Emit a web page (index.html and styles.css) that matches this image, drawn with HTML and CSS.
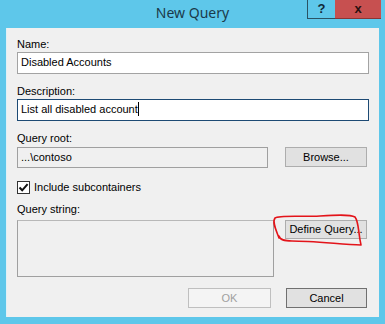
FILE: index.html
```html
<!DOCTYPE html>
<html>
<head>
<meta charset="utf-8">
<link rel="stylesheet" href="styles.css">
</head>
<body>
<div class="window">
  <div class="titlebar">
    <div class="title">New Query</div>
    <div class="caption-buttons">
      <div class="cap help">?</div>
      <div class="cap close">x</div>
    </div>
  </div>
  <div class="client">
    <div class="label first">Name:</div>
    <div class="input">Disabled Accounts</div>
    <div class="label">Description:</div>
    <div class="input focused">List all disabled account<span class="caret"></span></div>
    <div class="label">Query root:</div>
    <div class="row root-row">
      <div class="input readonly root">...\contoso</div>
      <div class="btn">Browse...</div>
    </div>
    <div class="check-row">
      <span class="checkbox"><svg width="11" height="11" viewBox="0 0 11 11"><path d="M1.5 5.5 L4.2 8.3 L9.6 2.2" fill="none" stroke="#111" stroke-width="2"/></svg></span>
      <span>Include subcontainers</span>
    </div>
    <div class="label qs">Query string:</div>
    <div class="row qs-row">
      <div class="textarea"></div>
      <div class="btn define">Define Query...</div>
    </div>
    <div class="row footer">
      <div class="btn disabled">OK</div>
      <div class="btn cancel">Cancel</div>
    </div>
  </div>
  <svg class="scribble" width="385" height="324" viewBox="0 0 385 324">
    <path d="M279 238 C276 230 272 222 275 218 C279 215 300 217 320 216 C335 215 350 214 355 217 C359 222 358 232 361 245 C340 244 310 241 292 241 C284 241 280 240 279 236" fill="none" stroke="#e3141a" stroke-width="1.6" stroke-linecap="round" stroke-linejoin="round"/>
  </svg>
</div>
</body>
</html>
```
FILE: styles.css
```css
html, body {
  margin: 0;
  padding: 0;
}
body {
  font-family: "Liberation Sans", "Noto Sans", sans-serif;
  font-size: 11px;
  color: #000;
}
.window {
  position: relative;
  width: 385px;
  height: 324px;
  background: #5ec7ea;
  overflow: hidden;
  display: flex;
  flex-direction: column;
}
.titlebar {
  position: relative;
  height: 28px;
  flex: none;
}
.title {
  text-align: center;
  font-family: "Noto Sans", "Liberation Sans", sans-serif;
  font-size: 14px;
  line-height: 26px;
  color: #1b3a4a;
}
.caption-buttons {
  position: absolute;
  top: 0;
  right: 4px;
  display: flex;
}
.cap {
  height: 19px;
  line-height: 18px;
  text-align: center;
  font-weight: bold;
  font-family: "Liberation Sans", sans-serif;
  box-sizing: border-box;
}
.help {
  width: 28px;
  font-size: 13px;
  color: #102838;
  border-left: 1px solid #2a5364;
  border-bottom: 1px solid #2a5364;
}
.close {
  width: 46px;
  background: #c75050;
  color: #2a1010;
  font-size: 13px;
  border-bottom: 1px solid #8a3535;
}
.client {
  margin: 0 6px 7px 6px;
  flex: 1;
  background: #f0f0f0;
  padding: 0 10px 0 10px;
  box-sizing: border-box;
  border-left: 1px solid #e0f1f7;
}
.label {
  height: 14px;
  line-height: 14px;
  margin-top: 10px;
  margin-bottom: 1px;
}
.label.first {
  margin-top: 9px;
}
.input {
  height: 22px;
  box-sizing: border-box;
  border: 1px solid #a3a3a3;
  background: #fff;
  line-height: 19px;
  padding-left: 3px;
  white-space: nowrap;
}
.input.focused {
  border-color: #1d4a74;
}
.caret {
  display: inline-block;
  width: 1px;
  height: 14px;
  background: #000;
  vertical-align: -3px;
}
.row {
  display: flex;
  align-items: flex-start;
}
.root-row {
  margin-top: 2px;
}
.input.readonly {
  background: #f0f0f0;
  height: 21px;
  line-height: 18px;
}
.root {
  width: 251px;
  border-color: #a0a0a0;
}
.btn {
  box-sizing: border-box;
  width: 82px;
  height: 20px;
  border: 1px solid #adadad;
  background: #e1e1e1;
  text-align: center;
  line-height: 18px;
  margin-left: auto;
  margin-right: 2px;
}
.check-row {
  display: flex;
  align-items: center;
  gap: 4px;
  margin-top: 12px;
  height: 14px;
}
.checkbox {
  box-sizing: border-box;
  width: 13px;
  height: 13px;
  border: 1px solid #333;
  background: #fff;
  display: flex;
  align-items: center;
  justify-content: center;
}
.label.qs {
  margin-top: 8px;
}
.qs-row {
  margin-top: 4px;
}
.textarea {
  box-sizing: border-box;
  width: 257px;
  height: 57px;
  border: 1px solid #a0a0a0;
  border-top-color: #b8b8b8;
  background: #f0f0f0;
}
.define {
  height: 19px;
  line-height: 17px;
}
.footer {
  margin-top: 11px;
  justify-content: flex-end;
  gap: 13px;
}
.footer .btn {
  margin-left: 0;
  width: 83px;
  height: 20px;
}
.btn.disabled {
  background: #f4f4f4;
  border-color: #bfbfbf;
  color: #a0a0a0;
}
.btn.cancel {
  width: 81px;
  border-color: #707070;
}
.scribble {
  position: absolute;
  left: 0;
  top: 0;
  pointer-events: none;
}
```
